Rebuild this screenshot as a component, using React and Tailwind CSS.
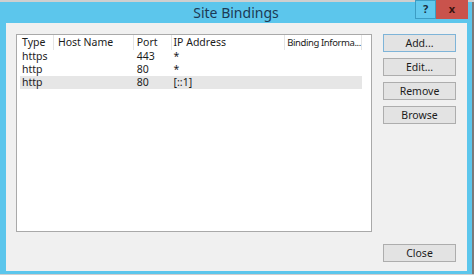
import React from "react";

const rows = [
  { type: "https", host: "", port: "443", ip: "*", info: "" },
  { type: "http", host: "", port: "80", ip: "*", info: "" },
  { type: "http", host: "", port: "80", ip: "[::1]", info: "", selected: true },
];

function Btn({ children, primary }) {
  return (
    <button
      className={
        "h-[18px] w-[73px] flex items-center justify-center text-[10.5px] leading-[14px] text-[#1b1b1b] bg-[#e3e3e3] border " +
        (primary ? "border-[#7eb4d8]" : "border-[#adadad]")
      }
    >
      {children}
    </button>
  );
}

export default function App() {
  return (
    <div
      className="w-[474px] h-[275px] bg-[#cfcfcf] pt-[2px] overflow-hidden"
      style={{ fontFamily: '"Noto Sans", "Open Sans", sans-serif' }}
    >
      <div className="relative w-[472px] h-[272px] bg-[#5cc6ec] flex flex-col">
        {/* title bar */}
        <div className="h-[21px] flex items-center justify-center text-[14px] text-[#1c3a55]">
          Site Bindings
        </div>
        <div className="absolute top-[-2px] right-[4px] flex h-[19px]">
          <div className="w-[21px] h-full flex items-center justify-center border border-[#3c9dc4] bg-[#62c9ee] text-[11px] font-bold text-[#1a2d3d]">
            ?
          </div>
          <div className="w-[32px] h-full flex items-center justify-center bg-[#c9534c] text-[11px] font-bold text-[#3a1410]">
            x
          </div>
        </div>

        {/* client area */}
        <div className="ml-[6px] mr-[5px] mb-[3px] flex-1 bg-[#f0f0f0] flex pl-[10px] pt-[11px] pb-[9px]">
          <div className="w-[356px] h-[198px] bg-white border border-[#a9a9a9] pl-[3px] pr-[9px] text-[10.5px] leading-[13px] text-[#1b1b1b]">
            <div className="flex h-[15px] items-center">
              <div className="w-[34px] pl-[2px] border-r border-[#e5e5e5] h-full flex items-center">Type</div>
              <div className="w-[80px] pl-[4px] border-r border-[#e5e5e5] h-full flex items-center">Host Name</div>
              <div className="w-[38px] pl-[3px] border-r border-[#e5e5e5] h-full flex items-center">Port</div>
              <div className="w-[114px] pl-[2px] border-r border-[#e5e5e5] h-full flex items-center">IP Address</div>
              <div className="w-[77px] pl-[2px] border-r border-[#e5e5e5] h-full flex items-center whitespace-nowrap text-[9.5px] tracking-[-0.4px]">
                Binding Informa...
              </div>
            </div>
            <div>
              {rows.map((r, i) => (
                <div
                  key={i}
                  className={"flex h-[13px] items-center " + (r.selected ? "bg-[#e6e6e6]" : "")}
                >
                  <div className="w-[34px] pl-[2px]">{r.type}</div>
                  <div className="w-[80px] pl-[4px]">{r.host}</div>
                  <div className="w-[38px] pl-[3px]">{r.port}</div>
                  <div className="w-[114px] pl-[2px]">{r.ip}</div>
                  <div className="w-[77px] pl-[2px]">{r.info}</div>
                </div>
              ))}
            </div>
          </div>
          <div className="ml-[11px] flex flex-col gap-[6px] h-full">
            <Btn primary>Add...</Btn>
            <Btn>Edit...</Btn>
            <Btn>Remove</Btn>
            <Btn>Browse</Btn>
            <div className="mt-auto">
              <Btn>Close</Btn>
            </div>
          </div>
        </div>
        <div className="absolute right-[-2px] top-0 w-[2px] h-full bg-[#7a7a7a]" />
      </div>
    </div>
  );
}
